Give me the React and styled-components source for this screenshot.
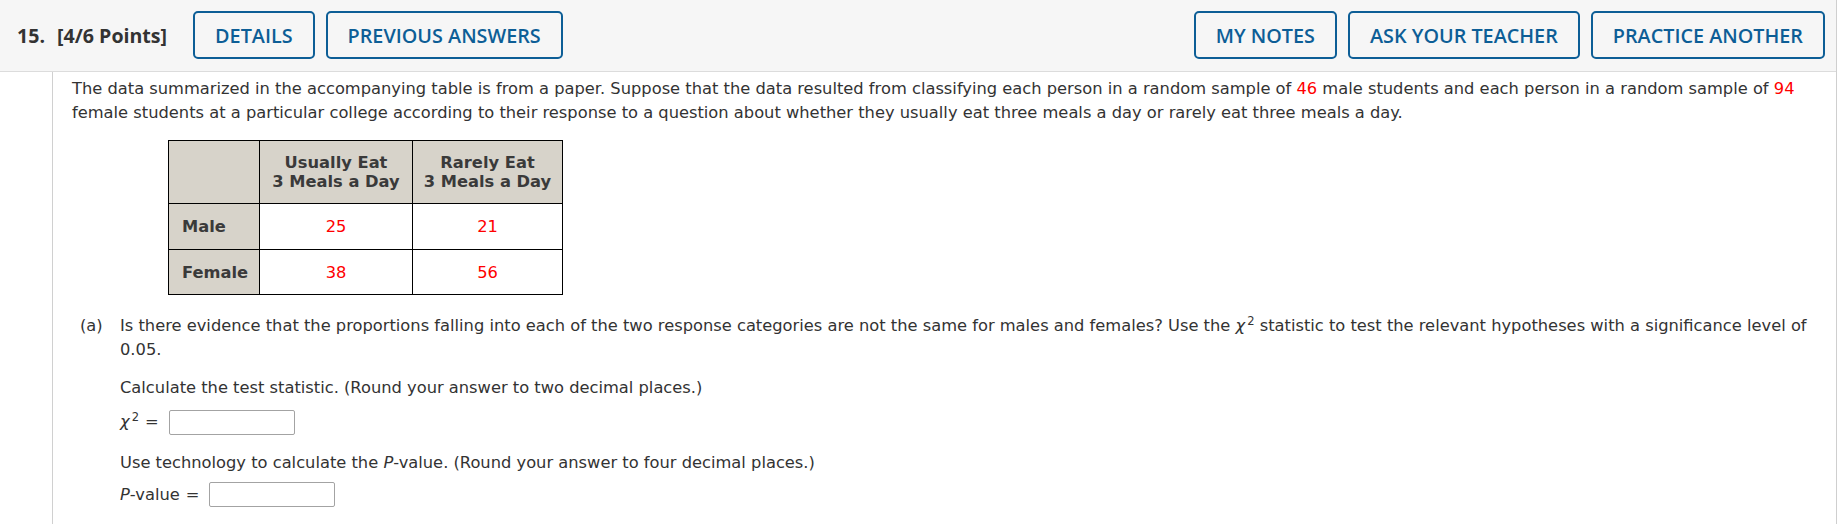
import React from "react";
import styled, { createGlobalStyle } from "styled-components";

const GlobalStyle = createGlobalStyle`
  body {
    margin: 0;
    background: #fff;
  }
`;

const Question = styled.div`
  width: 1836px;
  min-height: 524px;
  border-right: 1px solid #cfcfcf;
`;

const Header = styled.div`
  display: flex;
  align-items: center;
  height: 72px;
  padding: 0 11px 1px 17px;
  box-sizing: border-box;
  background: #f6f6f6;
  border-bottom: 1px solid #dcdcdc;
  font-family: "Open Sans", sans-serif;
`;

const Label = styled.div`
  font-size: 19.6px;
  font-weight: 700;
  color: #333;
  margin-right: 26px;
  span + span {
    margin-left: 12px;
  }
`;

const ButtonGroup = styled.div`
  display: flex;
  gap: 11px;
  margin-left: ${(p) => (p.$right ? "auto" : "0")};
`;

const HeaderButton = styled.button`
  height: 48px;
  padding: 0 20px;
  border: 2px solid #0d5e96;
  border-radius: 5px;
  background: transparent;
  color: #0d5e96;
  font-family: "Open Sans", sans-serif;
  font-size: 19.8px;
  font-weight: 600;
  cursor: pointer;
`;

const Body = styled.div`
  margin-left: 52px;
  border-left: 1px solid #d0d0d0;
  padding: 5px 20px 20px 19px;
  font-family: "DejaVu Sans", Verdana, sans-serif;
  font-size: 16.3px;
  line-height: 23.5px;
  color: #333;
  p {
    margin: 0;
  }
  sup {
    line-height: 0;
    font-size: 11.5px;
    margin-left: 2px;
  }
`;

const Red = styled.span`
  color: #f00;
`;

const DataTable = styled.table`
  border-collapse: collapse;
  table-layout: fixed;
  width: 394px;
  margin: 16px 0 0 96px;
  line-height: 19px;
  th,
  td {
    border: 1px solid #000;
    padding: 0;
  }
  th {
    background: #d7d3ca;
    color: #3a3a3a;
    font-weight: 700;
  }
  tbody th {
    text-align: left;
    padding-left: 13px;
  }
  td {
    text-align: center;
    color: #f00;
  }
`;

const Row = styled.tr`
  height: ${(p) => p.$h}px;
`;

const Part = styled.div`
  display: flex;
  margin-top: 19px;
`;

const PartLabel = styled.div`
  width: 40px;
  padding-left: 8px;
  flex-shrink: 0;
`;

const PartContent = styled.div`
  flex: 1;
`;

const Prompt = styled.p`
  margin-bottom: ${(p) => p.$mb || 0}px !important;
`;

const AnswerRow = styled.div`
  display: flex;
  align-items: center;
  height: 25px;
  margin: ${(p) => p.$m};
`;

const AnswerLabel = styled.span`
  white-space: nowrap;
`;

const Chi = styled.i`
  font-style: italic;
`;

const Eq = styled.span`
  margin: 0 10px 0 6px;
`;

const AnswerBox = styled.input`
  width: 126px;
  height: 25px;
  box-sizing: border-box;
  border: 1px solid #a3a3a3;
  border-radius: 2px;
  background: #fff;
  outline: none;
`;

export default function App() {
  return (
    <>
      <GlobalStyle />
      <Question>
        <Header>
          <Label>
            <span>15.</span>
            <span>[4/6 Points]</span>
          </Label>
          <ButtonGroup>
            <HeaderButton>DETAILS</HeaderButton>
            <HeaderButton>PREVIOUS ANSWERS</HeaderButton>
          </ButtonGroup>
          <ButtonGroup $right>
            <HeaderButton>MY NOTES</HeaderButton>
            <HeaderButton>ASK YOUR TEACHER</HeaderButton>
            <HeaderButton>PRACTICE ANOTHER</HeaderButton>
          </ButtonGroup>
        </Header>
        <Body>
          <p>
            The data summarized in the accompanying table is from a paper.
            Suppose that the data resulted from classifying each person in a
            random sample of <Red>46</Red> male students and each person in a
            random sample of <Red>94</Red> female students at a particular
            college according to their response to a question about whether
            they usually eat three meals a day or rarely eat three meals a day.
          </p>
          <DataTable>
            <colgroup>
              <col style={{ width: 91 }} />
              <col style={{ width: 153 }} />
              <col style={{ width: 150 }} />
            </colgroup>
            <thead>
              <Row $h={63}>
                <th></th>
                <th>
                  Usually Eat
                  <br />3 Meals a Day
                </th>
                <th>
                  Rarely Eat
                  <br />3 Meals a Day
                </th>
              </Row>
            </thead>
            <tbody>
              <Row $h={46}>
                <th>Male</th>
                <td>25</td>
                <td>21</td>
              </Row>
              <Row $h={45}>
                <th>Female</th>
                <td>38</td>
                <td>56</td>
              </Row>
            </tbody>
          </DataTable>
          <Part>
            <PartLabel>(a)</PartLabel>
            <PartContent>
              <Prompt $mb={15}>
                Is there evidence that the proportions falling into each of the
                two response categories are not the same for males and females?
                Use the <Chi>χ</Chi>
                <sup>2</sup> statistic to test the relevant hypotheses with a
                significance level of 0.05.
              </Prompt>
              <Prompt>
                Calculate the test statistic. (Round your answer to two decimal
                places.)
              </Prompt>
              <AnswerRow $m="10px 0 16px">
                <AnswerLabel>
                  <Chi>χ</Chi>
                  <sup>2</sup>
                </AnswerLabel>
                <Eq>=</Eq>
                <AnswerBox type="text" />
              </AnswerRow>
              <Prompt>
                Use technology to calculate the <Chi>P</Chi>-value. (Round your
                answer to four decimal places.)
              </Prompt>
              <AnswerRow $m="8px 0 0">
                <AnswerLabel>
                  <Chi>P</Chi>-value
                </AnswerLabel>
                <Eq>=</Eq>
                <AnswerBox type="text" />
              </AnswerRow>
            </PartContent>
          </Part>
        </Body>
      </Question>
    </>
  );
}
